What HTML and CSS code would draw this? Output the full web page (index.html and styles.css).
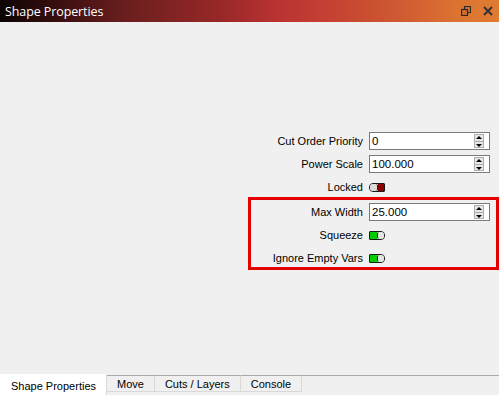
FILE: index.html
```html
<!DOCTYPE html>
<html>
<head>
<meta charset="utf-8">
<link rel="stylesheet" href="styles.css">
</head>
<body>
<div class="window">
  <div class="titlebar">
    <span class="title">Shape Properties</span>
    <div class="title-buttons">
      <svg class="tb-icon" width="10" height="10" viewBox="0 0 10 10">
        <rect x="3.5" y="0.5" width="6" height="6" fill="none" stroke="#2b2b2b" stroke-width="1.2"/>
        <rect x="0.5" y="3.5" width="6" height="6" fill="#d36a30" stroke="#2b2b2b" stroke-width="1.2"/>
      </svg>
      <svg class="tb-icon" width="10" height="10" viewBox="0 0 10 10">
        <path d="M1 1 L9 9 M9 1 L1 9" stroke="#333" stroke-width="2"/>
      </svg>
    </div>
  </div>
  <div class="content">
    <div class="form">
      <div class="row">
        <label class="lbl">Cut Order Priority</label>
        <div class="spin"><span class="val">0</span><div class="arrows"><span class="up"></span><span class="down"></span></div></div>
      </div>
      <div class="row">
        <label class="lbl">Power Scale</label>
        <div class="spin"><span class="val">100.000</span><div class="arrows"><span class="up"></span><span class="down"></span></div></div>
      </div>
      <div class="row">
        <label class="lbl">Locked</label>
        <div class="toggle off"><span class="knob"></span><span class="fill"></span></div>
      </div>
      <div class="highlight">
        <div class="row">
          <label class="lbl">Max Width</label>
          <div class="spin"><span class="val">25.000</span><div class="arrows"><span class="up"></span><span class="down"></span></div></div>
        </div>
        <div class="row">
          <label class="lbl">Squeeze</label>
          <div class="toggle on"><span class="fill"></span><span class="knob"></span></div>
        </div>
        <div class="row">
          <label class="lbl">Ignore Empty Vars</label>
          <div class="toggle on"><span class="fill"></span><span class="knob"></span></div>
        </div>
      </div>
    </div>
  </div>
  <div class="tabs">
    <div class="tab active">Shape Properties</div>
    <div class="tab">Move</div>
    <div class="tab">Cuts / Layers</div>
    <div class="tab">Console</div>
    <div class="tab-rest"></div>
  </div>
</div>
</body>
</html>
```
FILE: styles.css
```css
html, body {
  margin: 0;
  padding: 0;
  background: #f0f0f0;
}
.window {
  width: 499px;
  height: 395px;
  display: flex;
  flex-direction: column;
  font-family: "Liberation Sans", Arial, sans-serif;
  font-size: 11px;
  color: #000;
  overflow: hidden;
}
.titlebar {
  height: 22px;
  flex: 0 0 22px;
  display: flex;
  align-items: center;
  justify-content: space-between;
  background: linear-gradient(to right, #0d0404 0%, #3a0f0f 12%, #6a1e1e 25%, #9a2828 45%, #b93232 55%, #c43f33 65%, #cf5a31 80%, #dc7431 92%, #e07b32 100%);
}
.title {
  color: #fff;
  font-family: "Open Sans", "Noto Sans", sans-serif;
  font-size: 12.5px;
  padding-left: 5px;
  letter-spacing: -0.1px;
}
.title-buttons {
  display: flex;
  align-items: center;
  gap: 12px;
  padding-right: 6px;
}
.tb-icon { display: block; }
.content {
  flex: 1;
  display: flex;
  flex-direction: column;
  padding-top: 110px;
  padding-left: 251px;
}
.form {
  display: flex;
  flex-direction: column;
  gap: 5px;
  width: 244px;
}
.row {
  display: grid;
  grid-template-columns: 112px 121px;
  column-gap: 6px;
  align-items: center;
  height: 18px;
}
.lbl {
  text-align: right;
  white-space: nowrap;
}
.highlight {
  margin-left: -3px;
  margin-top: -4px;
  width: 245px;
  border: 3px solid #e50000;
  padding: 3px 0 0 0;
  height: 64px;
  display: flex;
  flex-direction: column;
  gap: 5px;
}
.spin {
  height: 18px;
  box-sizing: border-box;
  border: 1px solid #7a7a7a;
  background: #fff;
  display: flex;
  align-items: center;
  justify-content: space-between;
}
.val {
  padding-left: 2px;
  font-size: 11.5px;
  color: #000;
}
.arrows {
  width: 10px;
  height: 14px;
  margin-right: 5px;
  border: 1px solid #adadad;
  background: #e6e6e6;
  display: flex;
  flex-direction: column;
  box-sizing: border-box;
}
.arrows span {
  flex: 1;
  position: relative;
}
.arrows .up { border-bottom: 1px solid #adadad; }
.arrows .up::after, .arrows .down::after {
  content: "";
  position: absolute;
  left: 1px;
  width: 0;
  height: 0;
  border-left: 3px solid transparent;
  border-right: 3px solid transparent;
}
.arrows .up::after {
  top: 1px;
  border-bottom: 3px solid #000;
}
.arrows .down::after {
  top: 2px;
  border-top: 3px solid #000;
}
.toggle {
  width: 16px;
  height: 9px;
  box-sizing: border-box;
  border: 1px solid #1a1a1a;
  display: flex;
  overflow: hidden;
}
.toggle.off { border-radius: 4px 1px 1px 4px; }
.toggle.on { border-radius: 1px 4px 4px 1px; }
.toggle span { flex: 1; }
.toggle.off .knob { background: #e0dada; border-right: 1px solid #1a1a1a; border-radius: 0 2px 2px 0; }
.toggle.off .fill { background: #8b0000; }
.toggle.on .fill { background: #00cc00; }
.toggle.on .knob { background: #e2e6e2; border-left: 1px solid #1a1a1a; border-radius: 2px 0 0 2px; }
.tabs {
  flex: 0 0 21px;
  height: 21px;
  display: flex;
  align-items: flex-start;
}
.tab {
  height: 17px;
  margin-top: 1px;
  box-sizing: border-box;
  padding: 0 10px;
  line-height: 16px;
  border-top: 1px solid #a8a8a8;
  border-right: 1px solid #d9d9d9;
  border-bottom: 1px solid #d9d9d9;
  background: #f0f0f0;
  white-space: nowrap;
}
.tab.active {
  margin-top: 0;
  height: 21px;
  background: #fff;
  border-top: 1px solid #fff;
  border-bottom: none;
  padding: 0 10px 0 11px;
  line-height: 22px;
}
.tab-rest {
  flex: 1;
  height: 1px;
  margin-top: 1px;
  background: #a8a8a8;
}
```
